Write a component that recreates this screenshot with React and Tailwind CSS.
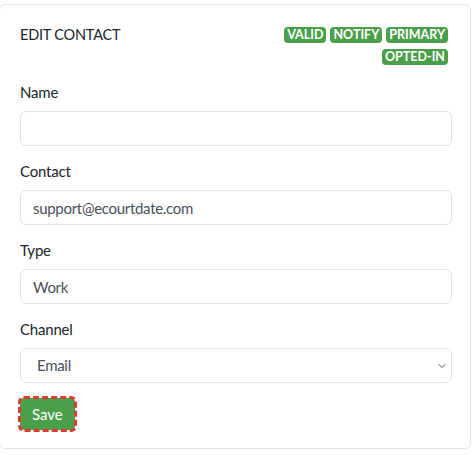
import { FiChevronDown } from 'react-icons/fi';

const BADGES = ['VALID', 'NOTIFY', 'PRIMARY', 'OPTED-IN'];

const inputCls =
  'w-full h-[35px] px-3 border border-[#e0e3e7] rounded-md text-[15px] tracking-[-0.3px] text-[#495057]';

function Field({ label, children }) {
  return (
    <div>
      <label className="block text-[15px] tracking-[-0.2px] leading-6 text-[#212529] mb-[7px]">{label}</label>
      {children}
    </div>
  );
}

export default function App() {
  return (
    <div className="pt-1 pr-[3px] bg-white" style={{ fontFamily: 'Lato, "Open Sans", sans-serif' }}>
      <div className="border border-[#e3e5e8] rounded-md -ml-px pl-5 pr-[18px] pt-[22px] pb-[18px] bg-white">
        <div className="flex justify-between items-start">
          <h2 className="text-[14.5px] tracking-[-0.2px] leading-6 text-[#212529] mt-[-4px]">EDIT CONTACT</h2>
          <div className="flex flex-wrap justify-end gap-x-1 gap-y-[6px] w-[170px] pr-1">
            {BADGES.map((b) => (
              <span key={b} className="h-4 px-[3px] rounded-[4px] bg-[#4b9f4b] text-white text-[12.5px] font-bold leading-4">
                {b}
              </span>
            ))}
          </div>
        </div>

        <div className="mt-[15px] flex flex-col gap-[13px]">
          <Field label="Name">
            <input type="text" className={inputCls} />
          </Field>
          <Field label="Contact">
            <input type="text" defaultValue="support@ecourtdate.com" className={inputCls} />
          </Field>
          <Field label="Type">
            <input type="text" defaultValue="Work" className={inputCls} />
          </Field>
          <Field label="Channel">
            <div className="relative">
              <select defaultValue="email" className="w-full h-[35px] pl-4 pr-8 appearance-none bg-white border border-[#e0e3e7] rounded-md text-[15px] tracking-[-0.3px] text-[#495057]">
                <option value="email">Email</option>
                <option value="sms">SMS</option>
              </select>
              <FiChevronDown className="absolute right-[4px] top-1/2 -translate-y-1/2 text-[#495057] pointer-events-none" size={12} />
            </div>
          </Field>
        </div>

        <button className="mt-[15px] h-8 px-3 rounded-[4px] bg-[#4b9f4b] text-white text-[15px] outline-[3px] outline-dashed outline-[#dc3a2f] outline-offset-[-1px]">
          Save
        </button>
      </div>
    </div>
  );
}
